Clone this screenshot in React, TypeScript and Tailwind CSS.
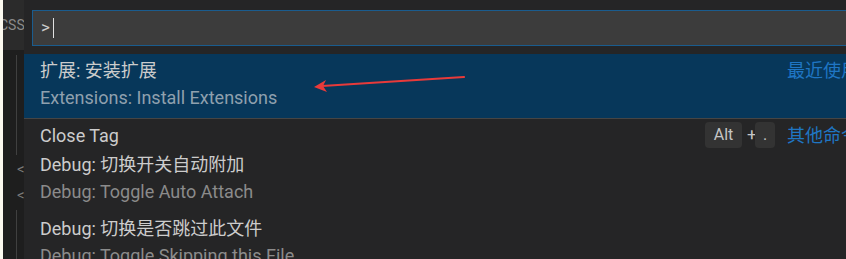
import React from "react";

const font = { fontFamily: 'Roboto, "Noto Sans CJK SC", sans-serif' };

function Key({ children, w }: { children: React.ReactNode; w: string }) {
  return (
    <span
      className={`flex h-[26px] items-center justify-center rounded-[4px] bg-[#333333] text-[16px] text-[#c5c5c5] ${w}`}
    >
      {children}
    </span>
  );
}

function Row({
  label,
  detail,
  selected,
  separator,
  right,
  keys,
}: {
  label: string;
  detail?: string;
  selected?: boolean;
  separator?: boolean;
  right?: string;
  keys?: string[];
}) {
  return (
    <div
      className={`flex shrink-0 items-start pl-[16px] pr-[12px] ${
        separator ? "border-t border-[#454545]" : ""
      } ${selected ? "bg-[#07375a]" : ""} ${detail ? "h-[64px]" : "h-[30px]"}`}
    >
      <div className="flex flex-1 flex-col whitespace-nowrap">
        <span className="h-[30px] pt-[3px] leading-[28px] text-[#cccccc]">{label}</span>
        {detail && (
          <span
            className={`leading-[28px] ${selected ? "text-[#8fa0ae]" : "text-[#8b8b8b]"}`}
          >
            {detail}
          </span>
        )}
      </div>
      {keys && (
        <div className="mt-[3px] mr-[12px] flex items-center text-[#c5c5c5]">
          <Key w="w-[37px]">{keys[0]}</Key>
          <span className="ml-[5px] mr-[1px] w-[7px] text-center text-[17px]">+</span>
          <Key w="w-[20px]">{keys[1]}</Key>
        </div>
      )}
      {right && (
        <span className="w-[72px] shrink-0 whitespace-nowrap pt-[3px] leading-[28px] text-[#1f76c4]">
          {right}
        </span>
      )}
    </div>
  );
}

export default function App() {
  return (
    <div
      className="relative flex h-[259px] w-[846px] overflow-hidden bg-[#fbf9ef] text-[18px]"
      style={font}
    >
      <div className="ml-[3px] flex w-[21px] shrink-0 flex-col bg-[#1e1e1e]">
        <div className="flex h-[50px] shrink-0 items-center overflow-hidden bg-[#2b2b2b]">
          <span className="-ml-[4px] whitespace-nowrap text-[14px] text-[#8a8a8a]">CSS</span>
        </div>
        <div className="relative flex-1">
          <div className="absolute left-[13px] top-[5px] h-[100px] w-px bg-[#404040]" />
          <span className="absolute left-[14px] top-[108px] text-[15px] text-[#7a7a7a]">&lt;</span>
          <span className="absolute left-[14px] top-[134px] text-[15px] text-[#7a7a7a]">&lt;</span>
          <div className="absolute left-[13px] top-[160px] h-[60px] w-px bg-[#404040]" />
        </div>
      </div>
      <div className="flex w-[847px] shrink-0 flex-col bg-[#252526]">
        <div className="shrink-0 px-[8px] pt-[10px] pb-[8px]">
          <div className="flex h-[36px] items-center border border-[#1a5c8e] bg-[#3c3c3c] pl-[8px]">
            <span className="text-[17px] text-[#cccccc]">&gt;</span>
            <span className="ml-[3px] h-[20px] w-px bg-[#e0e0e0]" />
          </div>
        </div>
        <Row
          label="扩展: 安装扩展"
          detail="Extensions: Install Extensions"
          selected
          right="最近使用"
        />
        <Row label="Close Tag" separator right="其他命令" keys={["Alt", "."]} />
        <Row label="Debug: 切换开关自动附加" detail="Debug: Toggle Auto Attach" />
        <Row label="Debug: 切换是否跳过此文件" detail="Debug: Toggle Skipping this File" />
      </div>
      <svg
        className="pointer-events-none absolute left-0 top-0"
        width="846"
        height="259"
        viewBox="0 0 846 259"
      >
        <line x1="464" y1="77" x2="322" y2="86" stroke="#e83a3a" strokeWidth="2.2" strokeLinecap="round" />
        <polygon points="314,87 326,80 323,86 327,92" fill="#e83a3a" />
      </svg>
    </div>
  );
}
